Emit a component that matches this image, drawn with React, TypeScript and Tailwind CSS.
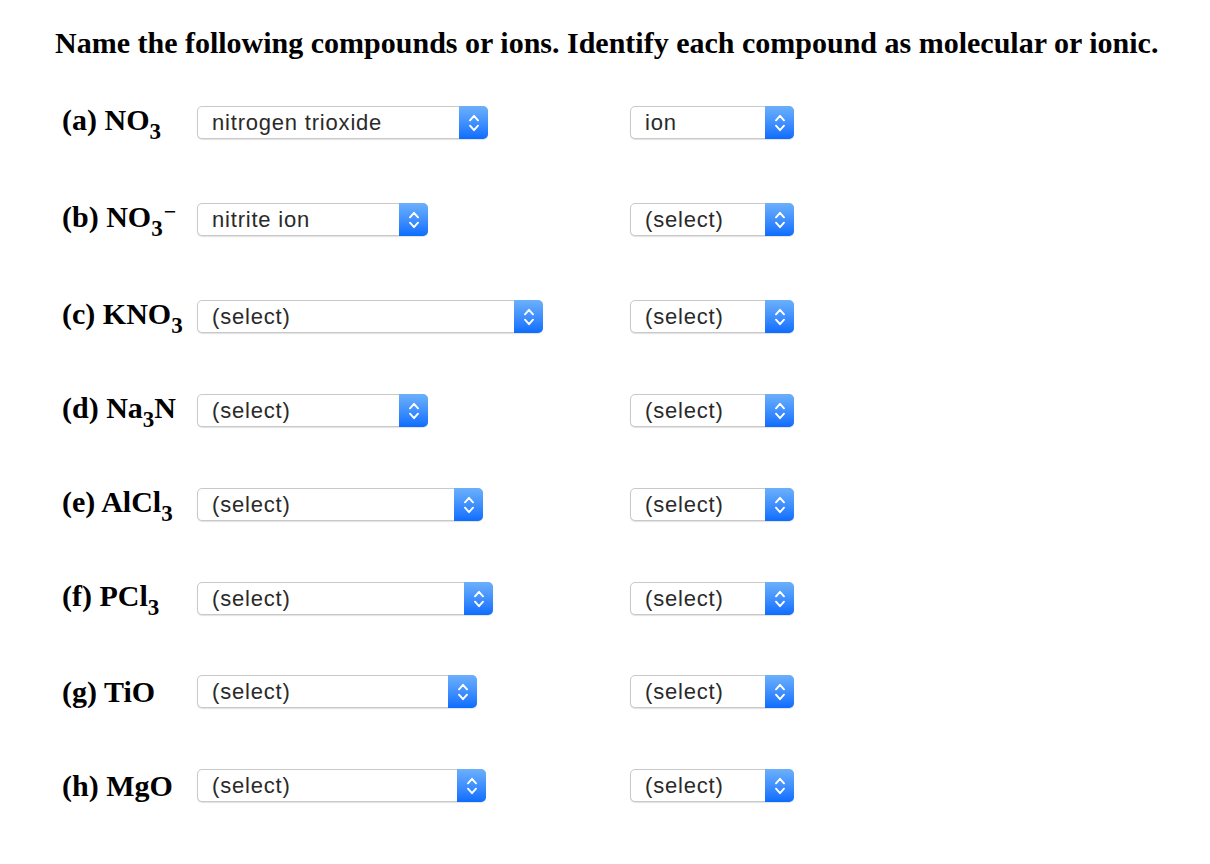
import React from "react";

const serif = { fontFamily: '"Liberation Serif", "Times New Roman", serif' };

function Chevrons() {
  return (
    <svg width="12" height="20" viewBox="0 0 12 20" fill="none">
      <path d="M2 7.3 L6 2.8 L10 7.3" stroke="white" strokeWidth="1.9" strokeLinecap="round" strokeLinejoin="round" />
      <path d="M2 12.7 L6 17.2 L10 12.7" stroke="white" strokeWidth="1.9" strokeLinecap="round" strokeLinejoin="round" />
    </svg>
  );
}

function FakeSelect({ value, width }: { value: string; width: number }) {
  return (
    <div
      className="flex h-[33px] items-stretch rounded-[5px] border border-[#c9c9c9] bg-white shadow-[0_1px_1px_rgba(0,0,0,0.12)]"
      style={{ width }}
    >
      <div
        className="flex flex-1 items-center pl-[14px] text-[22px] tracking-[0.8px] text-[#2a2a2a]"
        style={{ fontFamily: '"Liberation Sans", Arial, sans-serif' }}
      >
        {value}
      </div>
      <div className="-my-px -mr-px flex w-[29px] items-center justify-center rounded-r-[5px] bg-gradient-to-b from-[#6cb0fb] to-[#0a6cff]">
        <Chevrons />
      </div>
    </div>
  );
}

type Row = { label: React.ReactNode; name: string; w: number; kind: string; mt: number };

const Sub = ({ children }: { children: React.ReactNode }) => (
  <sub className="relative top-[3px] text-[23px] leading-none align-[-6px]">{children}</sub>
);

const rows: Row[] = [
  { label: <>(a) NO<Sub>3</Sub></>, name: "nitrogen trioxide", w: 291, kind: "ion", mt: 0 },
  {
    label: (
      <>
        (b) NO<Sub>3</Sub>
        <sup className="relative left-[1px] top-[-8px] text-[22px] leading-none">−</sup>
      </>
    ),
    name: "nitrite ion",
    w: 231,
    kind: "(select)",
    mt: 64,
  },
  { label: <>(c) KNO<Sub>3</Sub></>, name: "(select)", w: 346, kind: "(select)", mt: 64 },
  { label: <>(d) Na<Sub>3</Sub>N</>, name: "(select)", w: 231, kind: "(select)", mt: 61 },
  { label: <>(e) AlCl<Sub>3</Sub></>, name: "(select)", w: 286, kind: "(select)", mt: 61 },
  { label: <>(f) PCl<Sub>3</Sub></>, name: "(select)", w: 296, kind: "(select)", mt: 61 },
  { label: <>(g) TiO</>, name: "(select)", w: 280, kind: "(select)", mt: 61 },
  { label: <>(h) MgO</>, name: "(select)", w: 289, kind: "(select)", mt: 61 },
];

export default function App() {
  return (
    <div className="min-h-[864px] w-[1210px] bg-white text-black">
      <div className="pl-[55px] pt-[26px]">
        <h1 className="text-[30px] font-bold leading-[34px]" style={serif}>
          Name the following compounds or ions. Identify each compound as molecular or ionic.
        </h1>
        <div className="mt-[45px] pl-[7px]">
          {rows.map((r, i) => (
            <div
              key={i}
              className="grid h-[33px] grid-cols-[135px_433px_auto] items-center"
              style={{ marginTop: r.mt }}
            >
              <div className="whitespace-nowrap text-[30px] font-bold leading-none" style={serif}>
                {r.label}
              </div>
              <FakeSelect value={r.name} width={r.w} />
              <FakeSelect value={r.kind} width={164} />
            </div>
          ))}
        </div>
      </div>
    </div>
  );
}
